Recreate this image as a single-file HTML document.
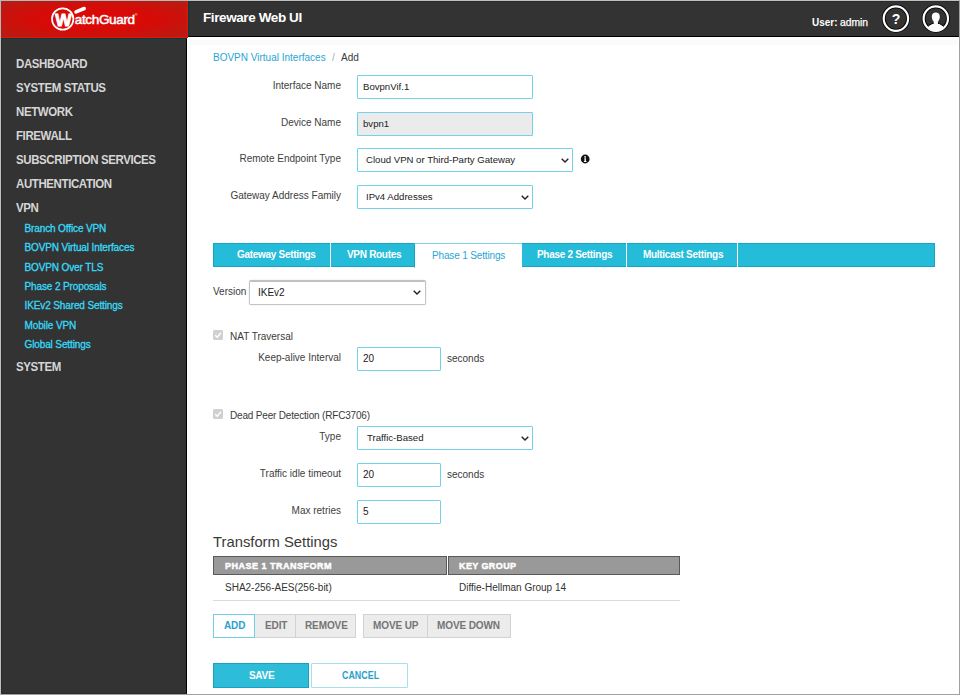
<!DOCTYPE html>
<html><head><meta charset="utf-8">
<style>
*{margin:0;padding:0;box-sizing:border-box}
html,body{width:960px;height:695px;overflow:hidden;background:#fff;font-family:"Liberation Sans",sans-serif}
.a{position:absolute;white-space:nowrap}
#frame{position:absolute;left:0;top:0;width:960px;height:695px;border-left:1px solid #c0c0c0;border-top:1px solid #c0c0c0;border-right:1px solid #a0a0a0;border-bottom:1px solid #a0a0a0}
#logo{position:absolute;left:1px;top:1px;width:187px;height:37px;background:radial-gradient(ellipse at 50% 50%,#e00806 0%,#d40c08 50%,#b41e14 100%);border-right:1px solid #e8140c;border-bottom:1px solid #e8140c}
#hdr{position:absolute;left:188px;top:1px;width:771px;height:36px;background:#333;border-bottom:1px solid #000;border-left:1px solid #0c3a3a;border-top:1px solid #2a2a2a}
#side{position:absolute;left:1px;top:38px;width:186px;height:656px;background:#333;border-right:1px solid #000;border-top:1px solid #0c3a3a;border-left:1px solid #2a2a2a;border-bottom:1px solid #2a2a2a}
.nav{font-size:11.5px;font-weight:bold;color:#d6d6d6;left:16px;letter-spacing:-0.4px;transform:scaleY(1.08);transform-origin:0 0}
.sub{font-size:10px;color:#36daf8;left:24.5px;-webkit-text-stroke:0.3px #36daf8;letter-spacing:-0.12px}
.lbl{font-size:10px;color:#404040;text-align:right;width:341px;left:0}
.txt{font-size:10px;color:#3a3a3a}
.inp{position:absolute;border:1px solid #72d2ea;background:#fff;border-radius:1px}
.val{font-size:9.6px;color:#222}
.chev{position:absolute;width:8px;height:5px}
.tab{position:absolute;top:243px;height:24px;background:#25bcd9;border-top:1px solid #16a3c4;border-bottom:1px solid #16a3c4}
.tabt{font-size:10px;font-weight:bold;color:#fff;letter-spacing:-0.3px}
.btn{position:absolute;top:614px;height:24px;background:#ececec;border:1px solid #d2d2d2}
.btnt{font-size:10px;font-weight:bold;color:#757575;letter-spacing:-0.1px}
</style></head><body>
<div id="frame"></div>
<div class="a" style="left:0;top:0;width:189px;height:1px;background:#abbcc0"></div><div class="a" style="left:0;top:0;width:1px;height:39px;background:#abbcc0"></div>
<div id="logo"></div>
<svg class="a" style="left:45px;top:2px" width="100" height="34" viewBox="0 0 100 34">
  <circle cx="17.7" cy="17" r="10.7" fill="none" stroke="#fff" stroke-width="1.7"/>
  <text x="10.2" y="23.6" font-family="Liberation Sans" font-weight="bold" font-size="17" fill="#fff" stroke="#fff" stroke-width="0.9" transform="translate(10.2 0) scale(1.02 1) translate(-10.2 0)" letter-spacing="-0.5">W</text>
  <path d="M31.0 9.8 L39.2 6.5" stroke="#fff" stroke-width="3.6" stroke-linecap="round"/>
  <text x="29.8" y="21.8" font-family="Liberation Sans" font-size="13.5" fill="#fff" stroke="#fff" stroke-width="0.5" letter-spacing="-0.35">atchGuard</text>
  <text x="89.6" y="13.5" font-family="Liberation Sans" font-size="4" fill="#fff">®</text>
</svg>
<div id="hdr"></div>
<div class="a" style="left:203px;top:10px;font-size:13.5px;font-weight:bold;color:#fff;letter-spacing:-0.4px">Fireware Web UI</div>
<div class="a" style="left:812px;top:17px;font-size:10px;font-weight:bold;color:#fff">User:</div><div class="a" style="left:840px;top:17px;font-size:10.3px;color:#fff;-webkit-text-stroke:0.25px #fff">admin</div>
<svg class="a" style="left:878px;top:4px" width="76" height="32" viewBox="0 0 76 32">
  <circle cx="17.9" cy="14.6" r="12.2" fill="none" stroke="#000" stroke-width="3.8"/>
  <circle cx="17.9" cy="14.6" r="12.2" fill="none" stroke="#fff" stroke-width="2.2"/>
  <text x="18" y="19.7" text-anchor="middle" font-family="Liberation Sans" font-weight="bold" font-size="14" fill="#fff">?</text>
  <defs><clipPath id="cc"><circle cx="57.8" cy="14.6" r="11.8"/></clipPath></defs>
  <circle cx="57.8" cy="14.6" r="12.2" fill="none" stroke="#000" stroke-width="3.8"/>
  <g clip-path="url(#cc)" fill="#fff">
    <ellipse cx="57.8" cy="28.2" rx="10.2" ry="9.2" stroke="#000" stroke-width="1"/>
    <path d="M53.8 12.6 C53.8 10.0 55.5 8.6 57.8 8.6 C60.1 8.6 61.8 10.0 61.8 12.6 C61.8 15.0 60.9 16.6 59.9 17.6 L59.9 20 L55.7 20 L55.7 17.6 C54.7 16.6 53.8 15.0 53.8 12.6 Z"/>
  </g>
  <circle cx="57.8" cy="14.6" r="12.2" fill="none" stroke="#fff" stroke-width="2.2"/>
</svg>

<div id="side"></div>
<div class="a nav" style="top:57px">DASHBOARD</div>
<div class="a nav" style="top:81px">SYSTEM STATUS</div>
<div class="a nav" style="top:105px">NETWORK</div>
<div class="a nav" style="top:129px">FIREWALL</div>
<div class="a nav" style="top:153px">SUBSCRIPTION SERVICES</div>
<div class="a nav" style="top:177px">AUTHENTICATION</div>
<div class="a nav" style="top:201px">VPN</div>
<div class="a sub" style="top:223px">Branch Office VPN</div>
<div class="a sub" style="top:242px">BOVPN Virtual Interfaces</div>
<div class="a sub" style="top:262px">BOVPN Over TLS</div>
<div class="a sub" style="top:281px">Phase 2 Proposals</div>
<div class="a sub" style="top:300px">IKEv2 Shared Settings</div>
<div class="a sub" style="top:320px">Mobile VPN</div>
<div class="a sub" style="top:339px">Global Settings</div>
<div class="a nav" style="top:360px">SYSTEM</div>

<!-- content -->
<div class="a" style="left:190px;top:40px;width:768px;height:5px;background:#fbfbfb"></div>
<div class="a txt" style="left:213px;top:52px;color:#27a6d4">BOVPN Virtual Interfaces</div>
<div class="a txt" style="left:332px;top:52px;color:#aaa">/</div>
<div class="a txt" style="left:341px;top:52px;color:#3a3a3a">Add</div>

<div class="a lbl" style="top:80px">Interface Name</div>
<div class="inp" style="left:357px;top:75px;width:176px;height:24px"></div>
<div class="a val" style="left:363px;top:81px">BovpnVif.1</div>

<div class="a lbl" style="top:117px">Device Name</div>
<div class="inp" style="left:357px;top:112px;width:176px;height:24px;background:#ebebeb"></div>
<div class="a val" style="left:363px;top:118px">bvpn1</div>

<div class="a lbl" style="top:153px">Remote Endpoint Type</div>
<div class="inp" style="left:357px;top:148px;width:216px;height:24px"></div>
<div class="a val" style="left:366px;top:154px">Cloud VPN or Third-Party Gateway</div>
<svg class="chev" style="left:561px;top:158px" viewBox="0 0 8 5"><path d="M0.7 0.7 L4 4 L7.3 0.7" fill="none" stroke="#222" stroke-width="1.4"/></svg>
<svg class="a" style="left:580px;top:154px" width="10" height="10" viewBox="0 0 10 10"><circle cx="5.2" cy="5" r="4.4" fill="#111"/><path d="M4.3 4.3 H5.9 V7.1 H6.5 V7.9 H3.9 V7.1 H4.5 V5.1 H4.3 Z" fill="#fff"/><circle cx="5.1" cy="2.9" r="0.85" fill="#fff"/></svg>

<div class="a lbl" style="top:190px">Gateway Address Family</div>
<div class="inp" style="left:357px;top:185px;width:176px;height:24px"></div>
<div class="a val" style="left:366px;top:191px">IPv4 Addresses</div>
<svg class="chev" style="left:521px;top:195px" viewBox="0 0 8 5"><path d="M0.7 0.7 L4 4 L7.3 0.7" fill="none" stroke="#222" stroke-width="1.4"/></svg>

<!-- tabs -->
<div class="tab" style="left:213px;width:722px;border-right:1px solid #16a3c4;border-left:1px solid #16a3c4"></div>
<div class="a" style="left:330px;top:243px;width:1px;height:24px;background:#fff"></div>
<div class="a" style="left:626px;top:243px;width:1px;height:24px;background:#fff"></div>
<div class="a" style="left:737px;top:243px;width:1px;height:24px;background:#fff"></div>
<div class="a" style="left:414px;top:243px;width:108px;height:25px;background:#fff;border-top:1px solid #7fd3e8;border-left:1px solid #16a3c4;border-bottom:1px solid #fff"></div>
<div class="a tabt" style="left:237px;top:249px">Gateway Settings</div>
<div class="a tabt" style="left:347px;top:249px">VPN Routes</div>
<div class="a txt" style="left:432px;top:250px;color:#2aa6d2;letter-spacing:-0.15px">Phase 1 Settings</div>
<div class="a tabt" style="left:537px;top:249px">Phase 2 Settings</div>
<div class="a tabt" style="left:643px;top:249px">Multicast Settings</div>

<div class="a txt" style="left:213px;top:286px">Version</div>
<div class="a" style="left:249px;top:280px;width:177px;height:25px;border:1px solid #c4c4c4;border-top:2px solid #c0c0c0;border-bottom:1.5px solid #c4c4c4;border-radius:2px;background:#fff;box-shadow:0 0 2px rgba(0,0,0,0.12)"></div>
<div class="a val" style="left:258px;top:287px;font-size:10px">IKEv2</div>
<svg class="chev" style="left:413px;top:290px" viewBox="0 0 8 5"><path d="M0.7 0.7 L4 4 L7.3 0.7" fill="none" stroke="#222" stroke-width="1.4"/></svg>

<svg class="a" style="left:213px;top:330px" width="10" height="10" viewBox="0 0 10 10"><rect x="0" y="0" width="10" height="10" rx="1.5" fill="#d0d0d0"/><path d="M2.2 5.2 L4.2 7.2 L8 2.8" fill="none" stroke="#fff" stroke-width="1.4"/></svg>
<div class="a txt" style="left:230px;top:331px">NAT Traversal</div>
<div class="a lbl" style="top:352px">Keep-alive Interval</div>
<div class="inp" style="left:357px;top:347px;width:84px;height:24px"></div>
<div class="a val" style="left:363px;top:353px;font-size:10px">20</div>
<div class="a txt" style="left:447px;top:353px">seconds</div>

<svg class="a" style="left:213px;top:409px" width="10" height="10" viewBox="0 0 10 10"><rect x="0" y="0" width="10" height="10" rx="1.5" fill="#d0d0d0"/><path d="M2.2 5.2 L4.2 7.2 L8 2.8" fill="none" stroke="#fff" stroke-width="1.4"/></svg>
<div class="a txt" style="left:230px;top:410px;letter-spacing:-0.18px">Dead Peer Detection (RFC3706)</div>
<div class="a lbl" style="top:431px">Type</div>
<div class="inp" style="left:357px;top:426px;width:176px;height:24px"></div>
<div class="a val" style="left:367px;top:432px">Traffic-Based</div>
<svg class="chev" style="left:521px;top:436px" viewBox="0 0 8 5"><path d="M0.7 0.7 L4 4 L7.3 0.7" fill="none" stroke="#222" stroke-width="1.4"/></svg>

<div class="a lbl" style="top:468px">Traffic idle timeout</div>
<div class="inp" style="left:357px;top:463px;width:84px;height:24px"></div>
<div class="a val" style="left:363px;top:469px;font-size:10px">20</div>
<div class="a txt" style="left:447px;top:469px">seconds</div>

<div class="a lbl" style="top:505px">Max retries</div>
<div class="inp" style="left:357px;top:500px;width:84px;height:24px"></div>
<div class="a val" style="left:363px;top:506px;font-size:10px">5</div>

<div class="a" style="left:213px;top:534px;font-size:14.8px;color:#3a3a3a">Transform Settings</div>
<div class="a" style="left:213px;top:556px;width:234px;height:19px;background:#999;border:1px solid #5a5a5a"></div>
<div class="a" style="left:448px;top:556px;width:232px;height:19px;background:#999;border:1px solid #5a5a5a"></div>
<div class="a" style="left:225px;top:561px;font-size:9px;font-weight:bold;color:#fff;letter-spacing:0.5px;-webkit-text-stroke:0.45px #fff">PHASE 1 TRANSFORM</div>
<div class="a" style="left:459px;top:561px;font-size:9px;font-weight:bold;color:#fff;letter-spacing:0.4px;-webkit-text-stroke:0.45px #fff">KEY GROUP</div>
<div class="a val" style="left:225px;top:582px;color:#333;font-size:10px">SHA2-256-AES(256-bit)</div>
<div class="a val" style="left:459px;top:582px;color:#333;font-size:10px">Diffie-Hellman Group 14</div>
<div class="a" style="left:213px;top:600px;width:467px;height:1px;background:#dcdcdc"></div>

<div class="btn" style="left:213px;width:42px;background:#fff;border-color:#6fcfe8;z-index:2"></div>
<div class="btn" style="left:254px;width:42px"></div>
<div class="btn" style="left:295px;width:61px"></div>
<div class="btn" style="left:363px;width:65px"></div>
<div class="btn" style="left:427px;width:84px"></div>
<div class="a btnt" style="left:224px;top:620px;color:#2a9fcb;z-index:3">ADD</div>
<div class="a btnt" style="left:265px;top:620px">EDIT</div>
<div class="a btnt" style="left:305px;top:620px">REMOVE</div>
<div class="a btnt" style="left:373px;top:620px">MOVE UP</div>
<div class="a btnt" style="left:437px;top:620px">MOVE DOWN</div>

<div class="a" style="left:213px;top:663px;width:96px;height:25px;background:#2ebdd8;border:1px solid #1d9fc2"></div>
<div class="a" style="left:249px;top:670px;font-size:10px;font-weight:bold;color:#fff;letter-spacing:-0.3px">SAVE</div>
<div class="a" style="left:311px;top:663px;width:97px;height:25px;background:#fff;border:1px solid #a6e0ef;border-radius:1px"></div>
<div class="a" style="left:342px;top:670px;font-size:10px;font-weight:bold;color:#2a9fcb;letter-spacing:0px;transform:scaleX(0.89);transform-origin:0 0">CANCEL</div>
</body></html>
